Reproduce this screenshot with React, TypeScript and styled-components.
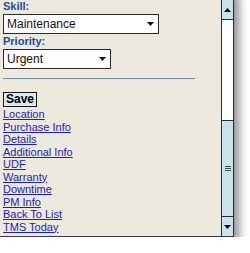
import styled, { createGlobalStyle } from "styled-components";

const GlobalStyle = createGlobalStyle`
  html, body {
    margin: 0;
    padding: 0;
    background: #ffffff;
    overflow: hidden;
  }
  body {
    font-family: "Liberation Sans", Arial, sans-serif;
  }
`;

const links = [
  "Location",
  "Purchase Info",
  "Details",
  "Additional Info",
  "UDF",
  "Warranty",
  "Downtime",
  "PM Info",
  "Back To List",
  "TMS Today",
];

const Frame = styled.div`
  display: flex;
  width: 234px;
  height: 249px;
  margin-top: -12px;
  padding-top: 12px;
  box-sizing: border-box;
  background: #ede9de;
  border-bottom: 1px solid #3a3a3a;
  box-shadow: 5px 6px 9px rgba(0, 0, 0, 0.45);
`;

const Content = styled.div`
  flex: 1;
  padding-left: 3px;
  display: flex;
  flex-direction: column;
  align-items: flex-start;
  overflow: hidden;
`;

const FieldLabel = styled.div`
  font-size: 11px;
  font-weight: bold;
  line-height: 13px;
  height: 14px;
  color: #1b4d9b;
`;

const SelectBox = styled.div<{ $width: number }>`
  width: ${(p) => p.$width}px;
  height: 20px;
  box-sizing: border-box;
  border: 1px solid #2a2a2a;
  background: #ffffff;
  display: flex;
  align-items: center;
  justify-content: space-between;
  padding: 0 4px 0 3px;
  font-size: 12px;
  color: #111;
  margin-bottom: 1px;
`;

const Rule = styled.div`
  width: 192px;
  height: 1px;
  margin-top: 8px;
  background: #6f8ea6;
  border-bottom: 1px solid #dde6ea;
`;

const SaveButton = styled.div`
  margin-top: 12px;
  height: 15px;
  box-sizing: border-box;
  padding: 0 2px;
  border: 1px solid #1a1a1a;
  background: #d6eaf2;
  font-size: 12px;
  font-weight: bold;
  line-height: 13px;
  color: #000;
`;

const LinkList = styled.div`
  display: flex;
  flex-direction: column;
  align-items: flex-start;
  margin-top: 1px;
`;

const NavLink = styled.a`
  font-size: 11px;
  line-height: 12.5px;
  color: #1c22b8;
  text-decoration: underline;
`;

const Scrollbar = styled.div`
  width: 13px;
  box-sizing: border-box;
  border-left: 1px solid #2b2b2b;
  border-right: 1px solid #2b2b2b;
  display: flex;
  flex-direction: column;
  background: #ffffff;
`;

const ScrollButton = styled.div<{ $bottom?: boolean }>`
  height: 20px;
  display: flex;
  align-items: center;
  justify-content: center;
  background: #c9e2ec;
  border-top: ${(p) => (p.$bottom ? "1px solid #2b2b2b" : "none")};
  border-bottom: ${(p) => (p.$bottom ? "none" : "1px solid #2b2b2b")};
  box-sizing: border-box;
`;

const Track = styled.div`
  height: 100px;
  background: #ffffff;
`;

const Thumb = styled.div`
  flex: 1;
  background: #c9e2ec;
  border-top: 1px solid #2b2b2b;
  display: flex;
  align-items: center;
  justify-content: center;
`;

const Grip = styled.div`
  width: 6px;
  height: 5px;
  border-top: 1px solid #3a4a55;
  border-bottom: 1px solid #3a4a55;
  box-sizing: border-box;
  background: linear-gradient(#3a4a55, #3a4a55) center / 100% 1px no-repeat;
`;

function Arrow({ up }: { up?: boolean }) {
  return (
    <svg width="7" height="4" viewBox="0 0 7 4">
      <path d={up ? "M0 4 L3.5 0 L7 4 Z" : "M0 0 L7 0 L3.5 4 Z"} fill="#111" />
    </svg>
  );
}

function Select({ value, width }: { value: string; width: number }) {
  return (
    <SelectBox $width={width}>
      <span>{value}</span>
      <Arrow />
    </SelectBox>
  );
}

export default function App() {
  return (
    <>
      <GlobalStyle />
      <Frame>
        <Content>
          <FieldLabel>Skill:</FieldLabel>
          <Select value="Maintenance" width={156} />
          <FieldLabel>Priority:</FieldLabel>
          <Select value="Urgent" width={108} />
          <Rule />
          <SaveButton>Save</SaveButton>
          <LinkList>
            {links.map((l) => (
              <NavLink key={l} href="#">
                {l}
              </NavLink>
            ))}
          </LinkList>
        </Content>
        <Scrollbar>
          <ScrollButton>
            <Arrow up />
          </ScrollButton>
          <Track />
          <Thumb>
            <Grip />
          </Thumb>
          <ScrollButton $bottom>
            <Arrow />
          </ScrollButton>
        </Scrollbar>
      </Frame>
    </>
  );
}
